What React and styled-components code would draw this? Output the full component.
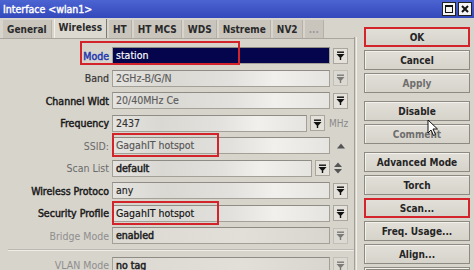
import React from 'react';
import styled, { createGlobalStyle } from 'styled-components';

const GlobalStyle = createGlobalStyle`
  html, body { margin: 0; padding: 0; background: #d6d3cb; }
  body {
    font-family: "DejaVu Sans Condensed", "DejaVu Sans", sans-serif;
    font-size: 10px;
    color: #222;
  }
`;

const Window = styled.div`
  position: relative;
  width: 474px;
  height: 270px;
  overflow: hidden;
  display: flex;
  flex-direction: column;
  background: #d7d4cc;
`;

const TitleBar = styled.div`
  height: 18px;
  flex: none;
  display: flex;
  align-items: center;
  justify-content: space-between;
  padding: 0 2px 0 3px;
  background: linear-gradient(#4c63d2, #3349bb);
  color: #fff;
  font-size: 10.5px;
  -webkit-text-stroke: 0.4px #fff;
`;

const WinButtons = styled.div`
  display: flex;
  gap: 2px;
`;

const WinButton = styled.div`
  width: 12px;
  height: 12px;
  background: #f4f4f4;
  border: 1px solid #222;
  display: flex;
  align-items: center;
  justify-content: center;
`;

const Body = styled.div`
  flex: 1;
  display: flex;
`;

const LeftPane = styled.div`
  width: 354px;
  display: flex;
  flex-direction: column;
`;

const TabBar = styled.div`
  height: 20px;
  display: flex;
  align-items: flex-end;
  gap: 2px;
  padding-left: 3px;
`;

const Tab = styled.div`
  height: ${({ active }) => (active ? 20 : 18)}px;
  padding: 0 ${({ active }) => (active ? 4 : 4)}px;
  display: flex;
  align-items: ${({ active }) => (active ? 'flex-start' : 'center')};
  padding-top: ${({ active }) => (active ? 3 : 0)}px;
  box-sizing: border-box;
  font-weight: bold;
  font-size: 10px;
  color: ${({ muted }) => (muted ? '#999' : '#2a2a2a')};
  background: ${({ active }) => (active ? '#dcd9d1' : '#c9c5bd')};
  border-right: 1px solid ${({ active }) => (active ? '#7d7a73' : '#b5b1a9')};
  border-left: ${({ active }) => (active ? '1px solid #f2f0ea' : 'none')};
  margin-bottom: ${({ active }) => (active ? -1 : 0)}px;
`;

const Form = styled.div`
  flex: 1;
  border-top: 1px solid #aaa69e;
  padding-top: 8px;
  display: flex;
  flex-direction: column;
  gap: 5.5px;
`;

const Row = styled.div`
  position: relative;
  height: 17px;
  display: flex;
  align-items: center;
  margin-top: ${({ spaced }) => (spaced ? 7 : 0)}px;
`;

const labelColors = {
  accent: '#2338b0',
  strong: '#1a1a1a',
  plain: '#353535',
  dim: '#6a6a6a',
  faint: '#8e8e8e',
};

const Label = styled.div`
  width: 112px;
  flex: none;
  padding-right: 3px;
  box-sizing: border-box;
  text-align: right;
  white-space: nowrap;
  overflow: hidden;
  font-size: 10.5px;
  color: ${({ tone }) => labelColors[tone]};
  -webkit-text-stroke: ${({ tone }) =>
    tone === 'accent' || tone === 'strong' ? '0.45px' : tone === 'plain' ? '0.2px' : '0'};
`;

const Field = styled.div`
  flex: 1;
  height: 17px;
  box-sizing: border-box;
  padding-left: 3px;
  line-height: 15px;
  white-space: nowrap;
  overflow: hidden;
  font-size: 10.5px;
  border: 1px solid #a3a098;
  border-top-color: #8f8c85;
  background: ${({ selected, disabled }) =>
    selected
      ? '#05054e'
      : disabled
      ? 'linear-gradient(to right, #dcd9d2, #e2dfd9 60%, #d9d6cf)'
      : 'linear-gradient(to right, #e5e3df, #dad8d3 25%, #e3e1dd 55%, #f1f0ed 75%, #e6e4e0)'};
  color: ${({ selected, color }) => (selected ? '#fff' : color || '#222')};
  -webkit-text-stroke: ${({ bold }) => (bold ? '0.5px' : '0.15px')};
`;

const Trail = styled.div`
  width: ${({ w }) => w}px;
  flex: none;
  display: flex;
  align-items: center;
  gap: 4px;
  padding-left: ${({ pad }) => pad || 3}px;
  box-sizing: border-box;
  color: #8a8a8a;
  font-size: 10px;
`;

const DropBtn = styled.div`
  width: 15px;
  height: 16px;
  flex: none;
  box-sizing: border-box;
  border: 1px solid #aaa69e;
  background: #e4e1db;
  display: flex;
  align-items: center;
  justify-content: center;
  opacity: ${({ dim }) => (dim ? 0.45 : 1)};
`;

const Highlight = styled.div`
  position: absolute;
  left: ${({ l }) => l}px;
  top: ${({ t }) => t}px;
  width: ${({ w }) => w}px;
  height: ${({ h }) => h}px;
  border: 2px solid #d3232b;
  box-sizing: border-box;
  pointer-events: none;
`;

const Separator = styled.div`
  width: 1px;
  margin-top: 19px;
  border-left: 1px solid #a29e96;
  border-right: 1px solid #f0eee9;
`;

const ButtonCol = styled.div`
  flex: 1;
  padding: 9px 4px 0 7px;
  display: flex;
  flex-direction: column;
`;

const Button = styled.div`
  height: 20px;
  flex: none;
  box-sizing: border-box;
  margin-top: ${({ gapTop }) => gapTop}px;
  display: flex;
  align-items: center;
  justify-content: center;
  font-weight: bold;
  font-size: 10px;
  color: ${({ disabled }) => (disabled ? '#6e6e6e' : '#252525')};
  background: ${({ dark }) => (dark ? '#8a877f' : 'linear-gradient(#e2dfd8, #d6d3cb)')};
  border: ${({ marked }) => (marked ? '2px solid #d3232b' : '1px solid #8d8a83')};
  box-shadow: ${({ marked }) => (marked ? 'none' : 'inset 1px 1px 0 #f3f1ec')};
`;

const HLine = styled.div`
  position: absolute;
  left: 8px;
  right: 0;
  top: -8px;
  border-top: 1px solid #bdb9b1;
  border-bottom: 1px solid #eeece6;
`;

const Cursor = styled.svg`
  position: absolute;
  left: 427px;
  top: 119px;
`;

const DropIcon = () => (
  <svg width="9" height="9" viewBox="0 0 9 9">
    <rect x="1" y="0.5" width="7" height="1.4" fill="#111" />
    <path d="M0.5 3 H8.5 L4.5 7.5 Z" fill="#111" />
    <rect x="3.8" y="7" width="1.4" height="2" fill="#111" />
  </svg>
);

const UpIcon = () => (
  <svg width="8" height="6" viewBox="0 0 8 6">
    <path d="M0 5.5 L4 0.5 L8 5.5 Z" fill="#555" />
  </svg>
);

const UpDownIcon = () => (
  <svg width="8" height="12" viewBox="0 0 8 12">
    <path d="M0 5 L4 0.5 L8 5 Z" fill="#555" />
    <path d="M0 7 L8 7 L4 11.5 Z" fill="#555" />
  </svg>
);

const rows = [
  { label: 'Mode', tone: 'accent', value: 'station', selected: true, drop: true },
  { label: 'Band', tone: 'plain', value: '2GHz-B/G/N', color: '#5c5c5c', drop: true, dimDrop: true },
  { label: 'Channel Widt', tone: 'strong', value: '20/40MHz Ce', color: '#5c5c5c', drop: true },
  { label: 'Frequency', tone: 'strong', value: '2437', color: '#333', kind: 'freq' },
  { label: 'SSID:', tone: 'dim', value: 'GagahIT hotspot', color: '#555', kind: 'up' },
  { label: 'Scan List', tone: 'dim', value: 'default', bold: true, kind: 'scan' },
  { label: 'Wireless Protoco', tone: 'strong', value: 'any', drop: true },
  { label: 'Security Profile', tone: 'strong', value: 'GagahIT hotspot', color: '#111', drop: true },
  { label: 'Bridge Mode', tone: 'faint', value: 'enabled', bold: true, disabled: true, drop: true, dimDrop: true },
  { label: 'VLAN Mode', tone: 'faint', value: 'no tag', bold: true, disabled: true, drop: true, dimDrop: true, spaced: true },
];

const highlights = {
  Mode: { l: 80, t: -6, w: 160, h: 24 },
  'SSID:': { l: 112, t: -4, w: 107, h: 24 },
  'Security Profile': { l: 112, t: -4, w: 107, h: 24 },
};

const buttons = [
  { text: 'OK', gap: 0, marked: true },
  { text: 'Cancel', gap: 3 },
  { text: 'Apply', gap: 3, disabled: true },
  { text: 'Disable', gap: 8 },
  { text: 'Comment', gap: 3, disabled: true },
  { text: 'Advanced Mode', gap: 8 },
  { text: 'Torch', gap: 3 },
  { text: 'Scan...', gap: 3, marked: true },
  { text: 'Freq. Usage...', gap: 3 },
  { text: 'Align...', gap: 3 },
  { text: '', gap: 3, dark: true },
];

function Trailing({ row }) {
  if (row.kind === 'freq') {
    return (
      <Trail w={47}>
        <DropBtn><DropIcon /></DropBtn>
        <span>MHz</span>
      </Trail>
    );
  }
  if (row.kind === 'up') {
    return (
      <Trail w={24} pad={7}>
        <UpIcon />
      </Trail>
    );
  }
  if (row.kind === 'scan') {
    return (
      <Trail w={42}>
        <DropBtn><DropIcon /></DropBtn>
        <UpDownIcon />
      </Trail>
    );
  }
  return (
    <Trail w={24}>
      <DropBtn dim={row.dimDrop}><DropIcon /></DropBtn>
    </Trail>
  );
}

export default function App() {
  return (
    <Window>
      <GlobalStyle />
      <TitleBar>
        <span>Interface &lt;wlan1&gt;</span>
        <WinButtons>
          <WinButton>
            <svg width="8" height="8" viewBox="0 0 8 8">
              <rect x="0.5" y="0.5" width="7" height="7" fill="none" stroke="#111" />
              <rect x="0.5" y="0.5" width="7" height="1.5" fill="#111" />
            </svg>
          </WinButton>
          <WinButton>
            <svg width="8" height="8" viewBox="0 0 8 8">
              <path d="M1 1 L7 7 M7 1 L1 7" stroke="#111" strokeWidth="2" />
            </svg>
          </WinButton>
        </WinButtons>
      </TitleBar>
      <Body>
        <LeftPane>
          <TabBar>
            <Tab>General</Tab>
            <Tab active>Wireless</Tab>
            <Tab>HT</Tab>
            <Tab>HT MCS</Tab>
            <Tab>WDS</Tab>
            <Tab>Nstreme</Tab>
            <Tab>NV2</Tab>
            <Tab muted>...</Tab>
          </TabBar>
          <Form>
            {rows.map((row) => (
              <Row key={row.label} spaced={row.spaced}>
                {row.spaced && <HLine />}
                <Label tone={row.tone}>{row.label}</Label>
                <Field
                  selected={row.selected}
                  disabled={row.disabled}
                  color={row.color}
                  bold={row.bold}
                >
                  {row.value}
                </Field>
                <Trailing row={row} />
                {highlights[row.label] && <Highlight {...highlights[row.label]} />}
              </Row>
            ))}
          </Form>
        </LeftPane>
        <Separator />
        <ButtonCol>
          {buttons.map((b, i) => (
            <Button key={i} gapTop={b.gap} marked={b.marked} disabled={b.disabled} dark={b.dark}>
              {b.text}
            </Button>
          ))}
        </ButtonCol>
      </Body>
      <Cursor width="12" height="18" viewBox="0 0 12 18">
        <path d="M1 1 L1 14 L4 11 L6.5 16.5 L8.5 15.5 L6 10 L10.5 10 Z" fill="#fff" stroke="#111" strokeWidth="1" />
      </Cursor>
    </Window>
  );
}
